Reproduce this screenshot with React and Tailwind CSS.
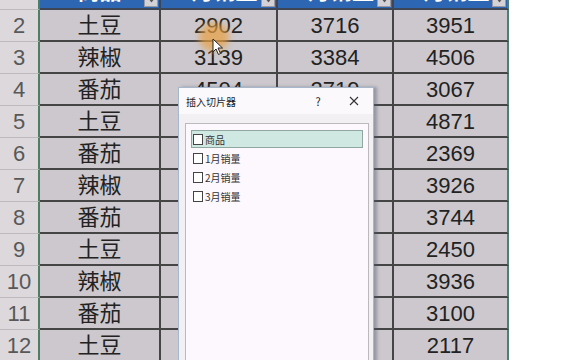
import React from "react";

const rows = [
  [2, "土豆", 2902, 3716, 3951],
  [3, "辣椒", 3139, 3384, 4506],
  [4, "番茄", 4504, 2719, 3067],
  [5, "土豆", "", "", 4871],
  [6, "番茄", "", "", 2369],
  [7, "辣椒", "", "", 3926],
  [8, "番茄", "", "", 3744],
  [9, "土豆", "", "", 2450],
  [10, "辣椒", "", "", 3936],
  [11, "番茄", "", "", 3100],
  [12, "土豆", "", "", 2117],
];

const headers = ["商品", "1月销量", "2月销量", "3月销量"];
const colW = ["w-[121px]", "w-[117px]", "w-[116px]", "w-[115px]"];
const fields = ["商品", "1月销量", "2月销量", "3月销量"];

function FilterButton() {
  return (
    <div className="relative w-[14px] h-[14px] mb-[1px] mr-[1px] bg-[#d4d2d6] border border-[#9a98a0] flex items-center justify-center">
      <svg width="7" height="5" viewBox="0 0 7 5">
        <path d="M0 0 L7 0 L3.5 4.5 Z" fill="#555" />
      </svg>
    </div>
  );
}

export default function App() {
  return (
    <div
      className="relative w-[576px] h-[360px] overflow-hidden bg-white"
      style={{ fontFamily: '"Liberation Sans", "Noto Sans CJK SC", sans-serif' }}
    >
      <div className="-mt-[22px] flex flex-col">
        {/* header row */}
        <div className="flex h-[32px]">
          <div className="w-[40px] shrink-0 bg-[#dcd8dc] border-r-2 border-r-[#4d7f62] border-b border-b-[#bdb9bd] flex items-center justify-center pb-[3px] text-[22px] text-[#555]">
            1
          </div>
          {headers.map((h, i) => (
            <div
              key={h}
              className={`${colW[i]} shrink-0 relative bg-[#2d66b3] border-r-2 border-b-2 border-[#3e4655] flex items-end justify-end ${i === 3 ? "border-r-[#4d7f72]" : ""}`}
            >
              <span className="absolute inset-0 pb-[3px] flex items-center justify-center text-white font-bold text-[22px]">
                {h}
              </span>
              <FilterButton />
            </div>
          ))}
        </div>

        {rows.map((r) => (
          <div key={r[0]} className="flex h-[32px]">
            <div className="w-[40px] shrink-0 bg-[#dcd8dc] border-r-2 border-r-[#4d7f62] border-b border-b-[#bdb9bd] flex items-center justify-center text-[22px] text-[#585858]">
              {r[0]}
            </div>
            {r.slice(1).map((v, i) => (
              <div
                key={i}
                className={`${colW[i]} shrink-0 bg-[#ccc8cd] border-b-2 border-r-2 border-[#454545] flex items-center justify-center text-[22px] text-[#222] ${i === 3 ? "border-r-[#4d7f72]" : ""}`}
              >
                {v}
              </div>
            ))}
          </div>
        ))}
      </div>

      {/* cursor highlight */}
      <div className="absolute left-[199px] top-[23px] w-[30px] h-[28px] rounded-full bg-[#eaa040] opacity-70 blur-[3px]" />
      <svg className="absolute left-[212px] top-[38px]" width="12" height="18" viewBox="0 0 12 18">
        <path d="M1 1 L1 14 L4 11 L6.5 16.5 L8.5 15.5 L6 10 L10.5 10 Z" fill="white" stroke="#222" strokeWidth="1" />
      </svg>

      {/* slicer dialog */}
      <div className="absolute left-[178px] top-[87px] w-[196px] h-[290px] flex flex-col bg-[#fcf9fc] border border-[#a7b7cc] shadow-[3px_0_3px_rgba(80,90,110,0.45)]">
        <div className="h-[26px] shrink-0 flex items-center pl-[7px] pr-[14px] text-[10px] text-[#222]" style={{ fontFamily: '"Noto Sans CJK SC", sans-serif' }}>
          <span className="flex-1">插入切片器</span>
          <span className="w-[10px] text-center text-[11px] mr-[26px]">?</span>
          <svg width="10" height="10" viewBox="0 0 10 10">
            <path d="M1 1 L9 9 M9 1 L1 9" stroke="#333" strokeWidth="1.1" />
          </svg>
        </div>
        <div className="flex-1 bg-[#f3f0f3] pt-[9px] pl-[6px] pr-[4px]">
          <div className="h-full bg-[#fdf8fd] border border-[#bcb8bc] pt-[6px] px-[5px] flex flex-col gap-[1px]">
            {fields.map((f, i) => (
              <div
                key={f}
                className={`h-[18px] flex items-center pl-[1px] text-[10px] text-[#333] ${i === 0 ? "bg-[#cfe8e1] border border-[#8fa7a0]" : "border border-transparent"}`}
                style={{ fontFamily: '"Noto Sans CJK SC", sans-serif' }}
              >
                <span className="w-[10px] h-[11px] border border-[#444] bg-white mr-[2px] shrink-0" />
                {f}
              </div>
            ))}
          </div>
        </div>
      </div>
    </div>
  );
}
